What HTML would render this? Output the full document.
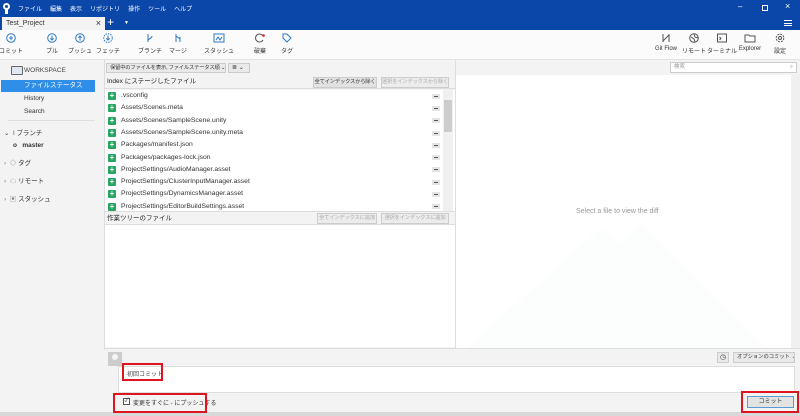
<!DOCTYPE html>
<html><head><meta charset="utf-8"><style>
*{box-sizing:border-box;margin:0;padding:0;white-space:nowrap}
body{width:800px;height:416px;overflow:hidden;background:#f3f3f3;font-family:"Liberation Sans","Noto Sans CJK JP",sans-serif;font-size:7px;color:#333;position:relative}
.a{position:absolute}
.menu span{margin-right:8px}
.tb{position:absolute;top:33px;text-align:center;font-size:6px;color:#333;width:40px}
.tb svg{display:block;margin:0 auto 3px}
.row{position:absolute;left:108px;height:12px;font-size:6.8px;line-height:12px;color:#333}
.row i{display:inline-block;width:8px;height:8px;background:#27a563;border-radius:1px;vertical-align:-1px;margin-right:5px;color:#fff;font-style:normal;font-size:8px;line-height:8px;text-align:center;font-weight:bold}
.mn{position:absolute;left:432px;width:8px;height:5px;background:#e4e4e4}
.mn:after{content:"";position:absolute;left:2px;top:2px;width:4px;height:1px;background:#555}
.btn{position:absolute;border:1px solid #ccc;background:#ececec;font-size:5.3px;text-align:center;line-height:9px;color:#aaa;overflow:hidden;letter-spacing:-.2px}
.red{position:absolute;border:2px solid #e0141e}
</style></head><body>
<div class="a" style="left:0;top:0;width:800px;height:30px;background:#0a47a8"></div>
<div class="a" style="left:3px;top:3px;width:7px;height:7px;border-radius:50%;border:2px solid #fff"></div>
<div class="a" style="left:5px;top:9px;width:3px;height:5px;background:#fff"></div>
<div class="a menu" style="left:18px;top:4px;color:#fff;font-size:6px"><span>ファイル</span><span>編集</span><span>表示</span><span>リポジトリ</span><span>操作</span><span>ツール</span><span>ヘルプ</span></div>
<div class="a" style="left:738px;top:2px;color:#fff;font-size:8px">–</div>
<div class="a" style="left:762px;top:5px;width:6px;height:6px;border:1px solid #fff"></div>
<div class="a" style="left:785px;top:1px;color:#fff;font-size:9px">×</div>
<div class="a" style="left:784px;top:20px;width:8px;height:6px;border-top:1px solid #fff;border-bottom:1px solid #fff"></div>
<div class="a" style="left:784px;top:22.5px;width:8px;height:1px;background:#fff"></div>
<div class="a" style="left:2px;top:17px;width:103px;height:13px;background:#f3f3f3;font-size:7px;line-height:13px;padding-left:4px">Test_Project<span style="position:absolute;right:4px;font-size:9px">×</span></div>
<div class="a" style="left:107px;top:15px;color:#fff;font-size:12px">+</div>
<div class="a" style="left:124px;top:20px;color:#fff;font-size:5px">▼</div>
<div class="a" style="left:0;top:30px;width:800px;height:30px;background:#fbfbfb;border-bottom:1px solid #e2e2e2"></div>
<div class="tb" style="left:-9px"><svg width="10" height="10"><circle cx="5" cy="5" r="4.3" fill="none" stroke="#2d78c8"/><path d="M5 3v4M3 5h4" stroke="#2d78c8"/></svg>コミット</div>
<div class="tb" style="left:32px"><svg width="10" height="10"><circle cx="5" cy="5" r="4.3" fill="none" stroke="#2d78c8"/><path d="M5 2.5v4.5M3.3 5.3L5 7l1.7-1.7" stroke="#2d78c8" fill="none"/></svg>プル</div>
<div class="tb" style="left:60px"><svg width="10" height="10"><circle cx="5" cy="5" r="4.3" fill="none" stroke="#2d78c8"/><path d="M5 7.5V3M3.3 4.7L5 3l1.7 1.7" stroke="#2d78c8" fill="none"/></svg>プッシュ</div>
<div class="tb" style="left:88px"><svg width="10" height="10"><circle cx="5" cy="5" r="4.3" fill="none" stroke="#2d78c8" stroke-dasharray="1.5 1"/><path d="M5 2.5v4.5M3.3 5.3L5 7l1.7-1.7" stroke="#2d78c8" fill="none"/></svg>フェッチ</div>
<div class="tb" style="left:130px"><svg width="10" height="10"><path d="M3 1v8M3 8C3 5 7 6 7 3" stroke="#2d78c8" fill="none"/></svg>ブランチ</div>
<div class="tb" style="left:158px"><svg width="10" height="10"><path d="M3 1v8M7 4v5M3 3l4 3" stroke="#2d78c8" fill="none"/></svg>マージ</div>
<div class="tb" style="left:199px"><svg width="12" height="10"><rect x="1" y="1" width="10" height="8" fill="none" stroke="#2d78c8"/><path d="M3 7l2-3 2 3 2-3" stroke="#2d78c8" fill="none"/></svg>スタッシュ</div>
<div class="tb" style="left:240px"><svg width="10" height="10"><path d="M8 3A4 4 0 1 0 8 7" stroke="#555" fill="none"/><circle cx="8.5" cy="2.5" r="1.3" fill="#e02020"/></svg>破棄</div>
<div class="tb" style="left:267px"><svg width="10" height="10"><path d="M1 1h4l4 4-4 4-4-4z" stroke="#2d78c8" fill="none"/></svg>タグ</div>
<div class="tb" style="left:646px"><svg width="10" height="10"><path d="M2 1v8M8 1v8M2 8l6-6" stroke="#555" fill="none"/></svg>Git Flow</div>
<div class="tb" style="left:674px"><svg width="10" height="10"><circle cx="5" cy="5" r="4.3" fill="none" stroke="#555"/><path d="M2 4l3 2 1 3M5 1l1 3 3 1" stroke="#555" fill="none"/></svg>リモート</div>
<div class="tb" style="left:702px"><svg width="10" height="10"><rect x=".5" y="1" width="9" height="8" fill="none" stroke="#555"/><path d="M2.5 4l1.5 1.5-1.5 1.5" stroke="#555" fill="none"/></svg>ターミナル</div>
<div class="tb" style="left:730px"><svg width="12" height="10"><path d="M1 2h4l1 1h5v6H1z" fill="none" stroke="#555"/></svg>Explorer</div>
<div class="tb" style="left:760px"><svg width="10" height="10"><circle cx="5" cy="5" r="3.8" fill="none" stroke="#555" stroke-dasharray="2 1"/><circle cx="5" cy="5" r="1.5" fill="none" stroke="#555"/></svg>設定</div>
<div class="a" style="left:11px;top:66px;width:12px;height:9px;border:1px solid #666;border-radius:1px;background:#dfe8f2"></div>
<div class="a" style="left:24px;top:67px;font-size:6.5px;color:#444">WORKSPACE</div>
<div class="a" style="left:1px;top:80px;width:94px;height:12px;background:#2f8ee8;color:#fff;font-size:6.5px;line-height:12px;padding-left:23px">ファイルステータス</div>
<div class="a" style="left:24px;top:95px;font-size:6.5px">History</div>
<div class="a" style="left:24px;top:108px;font-size:6.5px">Search</div>
<div class="a" style="left:8px;top:120px;width:87px;height:1px;background:#ddd"></div>
<div class="a" style="left:4px;top:127px;font-size:6.5px">⌄ &nbsp;<span style="color:#555">Ɩ</span> ブランチ</div>
<div class="a" style="left:13px;top:142px;font-size:6.5px;font-weight:bold">o &nbsp;&nbsp;master</div>
<div class="a" style="left:4px;top:157px;font-size:6.5px;color:#777">› &nbsp;◇ <span style="color:#333">タグ</span></div>
<div class="a" style="left:4px;top:175px;font-size:6.5px;color:#777">› &nbsp;☁ <span style="color:#333">リモート</span></div>
<div class="a" style="left:4px;top:193px;font-size:6.5px;color:#777">› &nbsp;▣ <span style="color:#333">スタッシュ</span></div>
<div class="a" style="left:104px;top:60px;width:1px;height:290px;background:#ddd"></div>
<div class="a" style="left:106px;top:63px;width:120px;height:10px;border:1px solid #ccc;background:#e9e9e9;font-size:5.3px;line-height:8px;padding-left:3px;overflow:hidden;letter-spacing:-.2px">保留中のファイルを表示, ファイルステータス順 ⌄</div>
<div class="a" style="left:228px;top:63px;width:22px;height:10px;border:1px solid #ccc;background:#e9e9e9;font-size:6px;line-height:8px;padding-left:3px">≣ ⌄</div>
<div class="a" style="left:670px;top:62px;width:127px;height:11px;border:1px solid #ccc;background:#fff;font-size:5.5px;line-height:9px;padding-left:3px;color:#999">検索<span style="position:absolute;right:3px">⌕</span></div>
<div class="a" style="left:105px;top:75px;width:350px;height:14px;background:#f3f3f3;border-bottom:1px solid #ddd;font-size:6.5px;line-height:14px;padding-left:2px;color:#222">Index にステージしたファイル</div>
<div class="btn" style="left:313px;top:77px;width:64px;height:11px;color:#333;background:#e2e2e2">全てインデックスから除く</div>
<div class="btn" style="left:381px;top:77px;width:68px;height:11px">選択をインデックスから除く</div>
<div class="a" style="left:105px;top:90px;width:350px;height:121px;background:#fff"></div>
<div class="a" style="left:443px;top:90px;width:10px;height:121px;background:#f0f0f0"></div>
<div class="a" style="left:444px;top:100px;width:8px;height:32px;background:#cdcdcd"></div>
<div class="row" style="top:90px"><i>+</i>.vsconfig</div>
<div class="row" style="top:102.3px"><i>+</i>Assets/Scenes.meta</div>
<div class="row" style="top:114.6px"><i>+</i>Assets/Scenes/SampleScene.unity</div>
<div class="row" style="top:126.9px"><i>+</i>Assets/Scenes/SampleScene.unity.meta</div>
<div class="row" style="top:139.2px"><i>+</i>Packages/manifest.json</div>
<div class="row" style="top:151.5px"><i>+</i>Packages/packages-lock.json</div>
<div class="row" style="top:163.8px"><i>+</i>ProjectSettings/AudioManager.asset</div>
<div class="row" style="top:176.1px"><i>+</i>ProjectSettings/ClusterInputManager.asset</div>
<div class="row" style="top:188.4px"><i>+</i>ProjectSettings/DynamicsManager.asset</div>
<div class="row" style="top:200.7px"><i>+</i>ProjectSettings/EditorBuildSettings.asset</div>
<div class="mn" style="top:94px"></div><div class="mn" style="top:106px"></div><div class="mn" style="top:118px"></div><div class="mn" style="top:131px"></div><div class="mn" style="top:143px"></div><div class="mn" style="top:155px"></div><div class="mn" style="top:167px"></div><div class="mn" style="top:180px"></div><div class="mn" style="top:192px"></div><div class="mn" style="top:204px"></div>
<div class="a" style="left:105px;top:211px;width:350px;height:14px;background:#f3f3f3;border-top:1px solid #ddd;border-bottom:1px solid #ddd;font-size:6.5px;line-height:13px;padding-left:2px;color:#222">作業ツリーのファイル</div>
<div class="btn" style="left:317px;top:213px;width:60px;height:11px">全てインデックスに追加</div>
<div class="btn" style="left:381px;top:213px;width:68px;height:11px">選択をインデックスに追加</div>
<div class="a" style="left:105px;top:225px;width:350px;height:122px;background:#fff"></div>
<div class="a" style="left:455px;top:60px;width:1px;height:288px;background:#ddd"></div>
<div class="a" style="left:456px;top:75px;width:344px;height:273px;background:#fff"></div>
<div class="a" style="left:791px;top:75px;width:9px;height:273px;background:#f0f0f0"></div>
<svg class="a" style="left:466px;top:218px" width="300" height="130"><path d="M0 130L135 10l20 15 20-20L300 130z" fill="#fbfefc"/></svg>
<div class="a" style="left:576px;top:208px;font-size:7px;color:#999">Select a file to view the diff</div>
<div class="a" style="left:105px;top:348px;width:695px;height:64px;background:#f3f3f3;border-top:1px solid #ddd"></div>
<div class="a" style="left:108px;top:352px;width:14px;height:14px;background:#ccc"></div>
<div class="a" style="left:112px;top:354px;width:6px;height:6px;border-radius:50%;background:#f4f4f4"></div>
<div class="a" style="left:717px;top:352px;width:12px;height:11px;border:1px solid #ccc;background:#e9e9e9;font-size:7px;line-height:9px;text-align:center">◷</div>
<div class="a" style="left:733px;top:352px;width:62px;height:11px;border:1px solid #ccc;background:#e9e9e9;font-size:5.3px;line-height:9px;padding-left:3px;overflow:hidden">オプションのコミット ⌄</div>
<div class="a" style="left:118px;top:366px;width:677px;height:27px;background:#fff;border:1px solid #ddd"></div>
<div class="a" style="left:127px;top:369px;font-size:6px;color:#444">初回コミット</div>
<div class="a" style="left:123px;top:398px;width:7px;height:7px;border:1px solid #555;background:#fff;font-size:6px;line-height:5px;text-align:center">✓</div>
<div class="a" style="left:133px;top:398px;font-size:6px;color:#333">変更をすぐに - にプッシュする</div>
<div class="a" style="left:747px;top:396px;width:47px;height:12px;border:1px solid #5b9bd5;background:#e3e3e3;font-size:6px;line-height:10px;text-align:center;color:#333">コミット</div>
<div class="a" style="left:0;top:412px;width:800px;height:4px;background:#d8d8d8"></div>
<div class="red" style="left:122px;top:363px;width:41px;height:18px"></div>
<div class="red" style="left:113px;top:393px;width:94px;height:20px"></div>
<div class="red" style="left:741px;top:391px;width:58px;height:22px"></div>
</body></html>
